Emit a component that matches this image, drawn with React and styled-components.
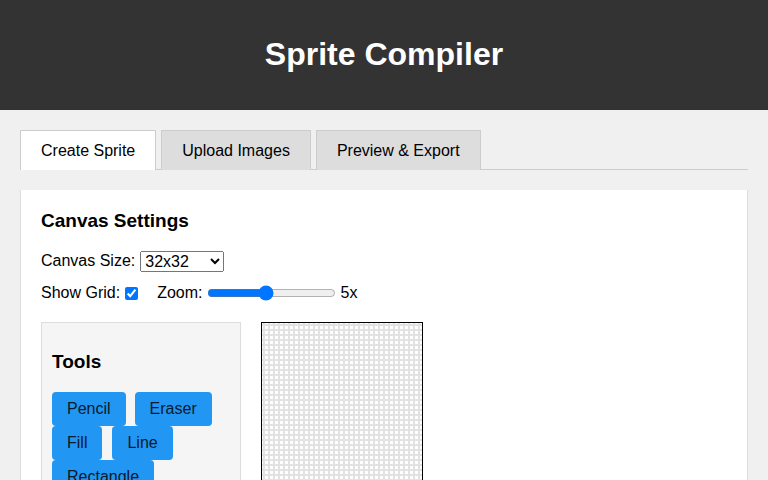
import React, { useState } from "react";
import styled, { createGlobalStyle } from "styled-components";

const GlobalStyle = createGlobalStyle`
  body {
    margin: 0;
    background: #f0f0f0;
    font-family: "Liberation Sans", Arial, sans-serif;
    color: #000;
  }
`;

const Header = styled.header`
  background: #333;
  color: white;
  text-align: center;
  padding: 36px 0 37px;
`;

const Title = styled.h1`
  margin: 0;
  font-size: 32px;
  line-height: 37px;
`;

const Main = styled.main`
  padding: 20px;
`;

const TabBar = styled.div`
  display: flex;
  gap: 5px;
  border-bottom: 1px solid #ccc;
  margin-bottom: 20px;
`;

const Tab = styled.button`
  font-family: inherit;
  font-size: 16px;
  padding: 10px 20px;
  height: 40px;
  border: 1px solid #ccc;
  border-bottom: none;
  background: ${p => (p.active ? "white" : "#ddd")};
  margin-bottom: -1px;
  color: #000;
  cursor: pointer;
`;

const Card = styled.section`
  background: white;
  padding: 20px;
  border: 1px solid #ddd;
  border-top: none;
`;

const Heading = styled.h3`
  margin: 0 0 18px;
  font-size: 19px;
  line-height: 22px;
`;

const Row = styled.div`
  display: flex;
  align-items: center;
  height: 22px;
  margin-bottom: 10px;
  font-size: 16px;
`;

const Select = styled.select`
  font-family: inherit;
  font-size: 16px;
  margin-left: 5px;
  width: 84px;
  height: 21px;
`;

const Check = styled.input`
  margin: 0 0 0 5px;
  width: 13px;
  height: 13px;
  accent-color: #0075ff;
`;

const ZoomLabel = styled.span`
  margin-left: 19px;
`;

const Range = styled.input`
  margin: 0 4px 0 5px;
  width: 129px;
`;

const Workspace = styled.div`
  display: flex;
  align-items: flex-start;
  gap: 20px;
  margin-top: 18px;
`;

const ToolPanel = styled.div`
  width: 178px;
  padding: 10px;
  background: #f5f5f5;
  border: 1px solid #ddd;
  height: 300px;
`;

const ToolHeading = styled.h3`
  margin: 18px 0 19px;
  font-size: 19px;
  line-height: 22px;
`;

const ToolButton = styled.button`
  font-family: inherit;
  font-size: 16px;
  padding: 8px 15px;
  height: 34px;
  border: none;
  border-radius: 4px;
  background: #2196f3;
  color: #0a1a2a;
  margin: 0 ${p => p.gap}px 0 0;
  cursor: pointer;
`;

const ToolRow = styled.div`
  display: flex;
`;

const Canvas = styled.div`
  width: 160px;
  height: 160px;
  border: 1px solid #000;
  background-color: #fff;
  background-image:
    linear-gradient(to right, #e2e2e2 2px, transparent 2px),
    linear-gradient(to bottom, #e2e2e2 2px, transparent 2px);
  background-size: 5px 5px;
  background-position: 1px 1px;
`;

export default function App() {
  const [tab, setTab] = useState(0);
  const [zoom, setZoom] = useState(5);
  const [grid, setGrid] = useState(true);
  const tabs = ["Create Sprite", "Upload Images", "Preview & Export"];

  return (
    <>
      <GlobalStyle />
      <Header>
        <Title>Sprite Compiler</Title>
      </Header>
      <Main>
        <TabBar>
          {tabs.map((t, i) => (
            <Tab key={t} active={i === tab} onClick={() => setTab(i)}>
              {t}
            </Tab>
          ))}
        </TabBar>
        <Card>
          <Heading>Canvas Settings</Heading>
          <Row>
            Canvas Size:
            <Select defaultValue="32">
              <option value="16">16x16</option>
              <option value="32">32x32</option>
              <option value="64">64x64</option>
            </Select>
          </Row>
          <Row>
            Show Grid:
            <Check type="checkbox" checked={grid} onChange={e => setGrid(e.target.checked)} />
            <ZoomLabel>Zoom:</ZoomLabel>
            <Range type="range" min="1" max="10" value={zoom} onChange={e => setZoom(+e.target.value)} />
            {zoom}x
          </Row>
          <Workspace>
            <ToolPanel>
              <ToolHeading>Tools</ToolHeading>
              <ToolRow>
                <ToolButton gap={9}>Pencil</ToolButton>
                <ToolButton gap={9}>Eraser</ToolButton>
              </ToolRow>
              <ToolRow>
                <ToolButton gap={10}>Fill</ToolButton>
                <ToolButton gap={10}>Line</ToolButton>
              </ToolRow>
              <ToolRow>
                <ToolButton gap={10}>Rectangle</ToolButton>
              </ToolRow>
            </ToolPanel>
            <Canvas />
          </Workspace>
        </Card>
      </Main>
    </>
  );
}
